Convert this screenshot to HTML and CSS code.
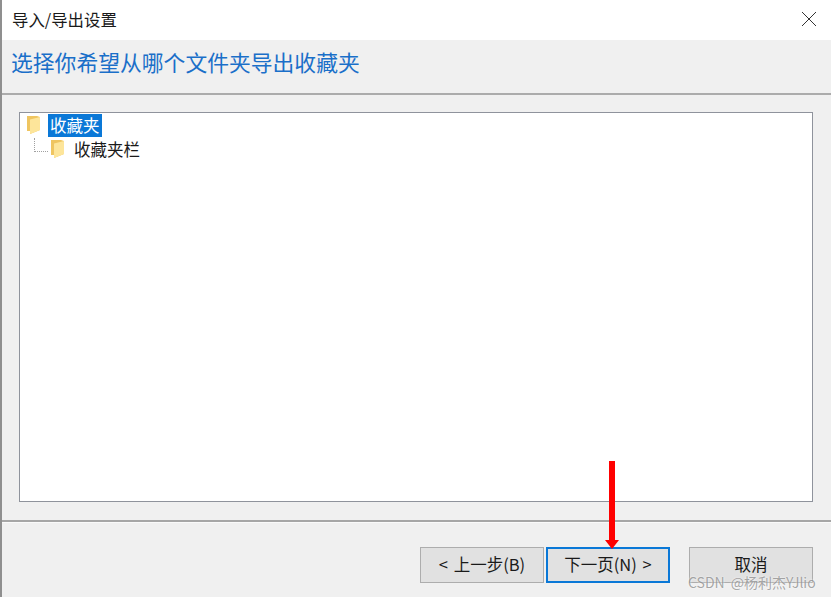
FILE: index.html
```html
<!DOCTYPE html>
<html lang="zh-CN">
<head>
    <meta charset="UTF-8">
    <meta name="viewport" content="width=device-width, initial-scale=1.0">
    <title>导入/导出设置</title>
    <link rel="stylesheet" href="styles.css">
</head>
<body>
    <div class="dialog">
        <div class="title-bar">
            <span class="title">导入/导出设置</span>
            <svg class="close" width="16" height="16" viewBox="0 0 16 16">
                <path d="M1 1L15 15M15 1L1 15" stroke="#333" stroke-width="1" fill="none"/>
            </svg>
        </div>
        <div class="header">选择你希望从哪个文件夹导出收藏夹</div>
        <div class="main">
            <div class="tree">
                <div class="tree-row">
                    <svg class="folder" width="16" height="20" viewBox="0 0 16 20">
                        <path d="M1 1H11L14 2V15L4 19V16H1Z" fill="#efc560"/>
                        <path d="M4 4.5L14 2V15L4 19Z" fill="#fde59a"/>
                    </svg>
                    <span class="label selected">收藏夹</span>
                </div>
                <div class="tree-row child">
                    <span class="branch"></span>
                    <svg class="folder" width="16" height="20" viewBox="0 0 16 20">
                        <path d="M1 1H11L14 2V15L4 19V16H1Z" fill="#efc560"/>
                        <path d="M4 4.5L14 2V15L4 19Z" fill="#fde59a"/>
                    </svg>
                    <span class="label">收藏夹栏</span>
                </div>
            </div>
        </div>
        <div class="footer">
            <button class="btn">&lt; 上一步(B)</button>
            <button class="btn default">下一页(N) &gt;</button>
            <button class="btn cancel">取消</button>
        </div>
    </div>

    <svg class="arrow" width="16" height="90" viewBox="0 0 16 90">
        <path d="M5 0H11V79H15L8 88L1 79H5Z" fill="#ff0000"/>
    </svg>
    <div class="watermark">CSDN @杨利杰YJlio</div>
</body>
</html>
```

FILE: styles.css
```css
* {
    margin: 0;
    padding: 0;
    box-sizing: border-box;
    font-family: "Noto Sans CJK SC", "Liberation Sans", sans-serif;
}

html, body {
    width: 831px;
    height: 597px;
    overflow: hidden;
}

body {
    position: relative;
    background: #f0f0f0;
}

.dialog {
    height: 597px;
    display: flex;
    flex-direction: column;
    border-left: 2px solid #8f8f8f;
    color: #1a1a1a;
}

.title-bar {
    height: 40px;
    flex: none;
    background: #fff;
    display: flex;
    align-items: center;
    justify-content: space-between;
    padding: 0 14px 2px 10px;
}

.title {
    font-size: 16.4px;
}

.header {
    height: 55px;
    flex: none;
    padding: 7px 0 0 9px;
    font-size: 21.8px;
    line-height: 30px;
    color: #1a6fc9;
    border-bottom: 2px solid #ababab;
}

.main {
    flex: 1;
    padding: 17px 18px 18px 17px;
    border-bottom: 2px solid #a6a6a6;
}

.tree {
    height: 100%;
    background: #fff;
    border: 1px solid #8f939c;
    padding: 0 0 0 6px;
}

.tree-row {
    height: 24px;
    display: flex;
    align-items: center;
    font-size: 16.5px;
}

.tree-row.child {
    padding-left: 8px;
    position: relative;
}

.folder {
    flex: none;
    width: 16px;
    height: 20px;
}

.label {
    margin-left: 6px;
    padding: 0 2px;
    height: 23px;
    line-height: 22px;
}

.label.selected {
    margin-top: 1px;
    background: #0a78d7;
    color: #fff;
}

.child .folder {
    margin-left: 16px;
}

.child .label {
    margin-left: 6px;
}

.branch {
    position: absolute;
    left: 8px;
    top: 1px;
    width: 14px;
    height: 14px;
    border-left: 1px dotted #a0a0a0;
    border-bottom: 1px dotted #a0a0a0;
}

.footer {
    height: 75px;
    flex: none;
    display: flex;
    align-items: flex-start;
    padding: 24px 0 0 418px;
    border-top: 1px solid #fafafa;
}

.btn {
    width: 124px;
    height: 36px;
    padding-bottom: 2px;
    background: #e1e1e1;
    border: 1px solid #adadad;
    font-size: 16.5px;
    line-height: 20px;
    word-spacing: 2px;
    color: #1a1a1a;
}

.btn.default {
    margin-left: 2px;
    border: 2px solid #0a78d7;
}

.btn.cancel {
    margin-left: 19px;
}

/* annotations drawn over the screenshot */
.arrow {
    position: absolute;
    left: 604px;
    top: 461px;
}

.watermark {
    position: absolute;
    left: 688px;
    top: 574px;
    font-size: 14px;
    line-height: 16px;
    word-spacing: 3px;
    white-space: nowrap;
    color: rgba(110, 110, 110, 0.6);
    text-shadow: 0 0 2px #fff;
}
```
